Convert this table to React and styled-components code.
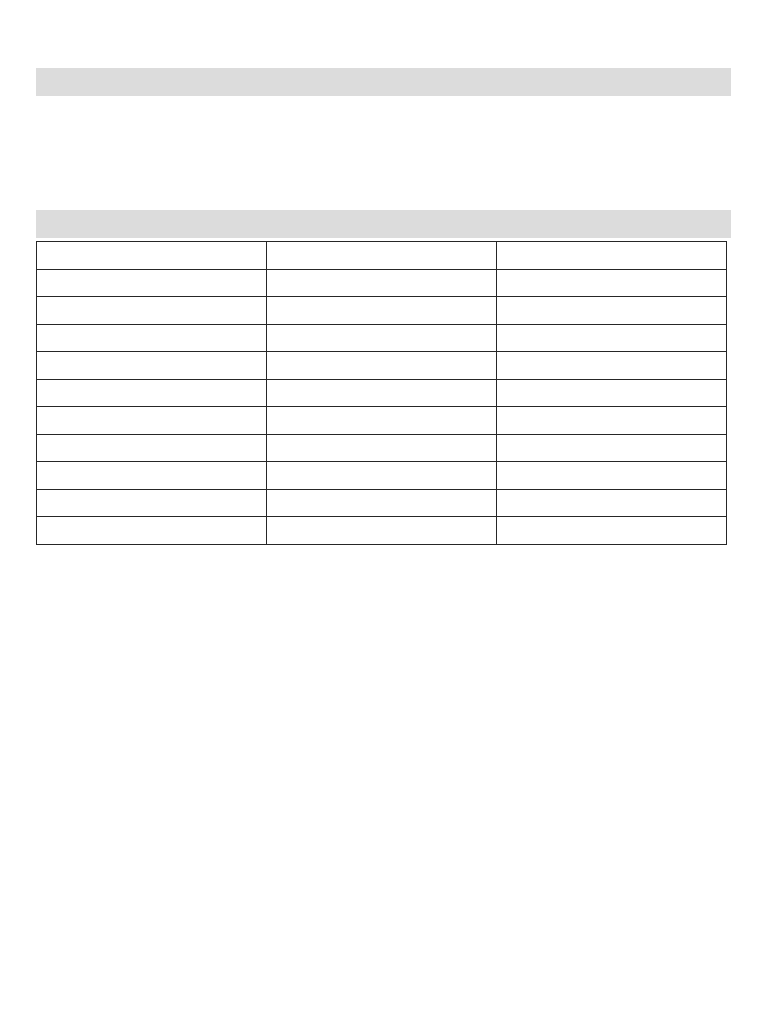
import React from "react";
import styled, { createGlobalStyle } from "styled-components";

const Global = createGlobalStyle`
  body {
    margin: 0;
    background: #ffffff;
    font-family: "Liberation Sans", Arial, sans-serif;
  }
`;

const Page = styled.div`
  width: 768px;
  height: 1024px;
  padding: 68px 37px 0 36px;
  box-sizing: border-box;
  display: flex;
  flex-direction: column;
`;

const Bar = styled.div`
  height: 28px;
  background: #dcdcdc;
  margin-bottom: ${(p) => p.$gap || 0}px;
`;

const Spacer = styled.div`
  height: 114px;
`;

const Table = styled.table`
  width: 691px;
  border-collapse: collapse;
  table-layout: fixed;
`;

const Cell = styled.td`
  border: 1px solid #262626;
  height: 26.5px;
  padding: 0;
`;

const rows = Array.from({ length: 11 }, (_, i) => i);

export default function App() {
  return (
    <>
      <Global />
      <Page>
        <Bar />
        <Spacer />
        <Bar $gap={3} />
        <Table>
          <tbody>
            {rows.map((r) => (
              <tr key={r}>
                <Cell />
                <Cell />
                <Cell />
              </tr>
            ))}
          </tbody>
        </Table>
      </Page>
    </>
  );
}
